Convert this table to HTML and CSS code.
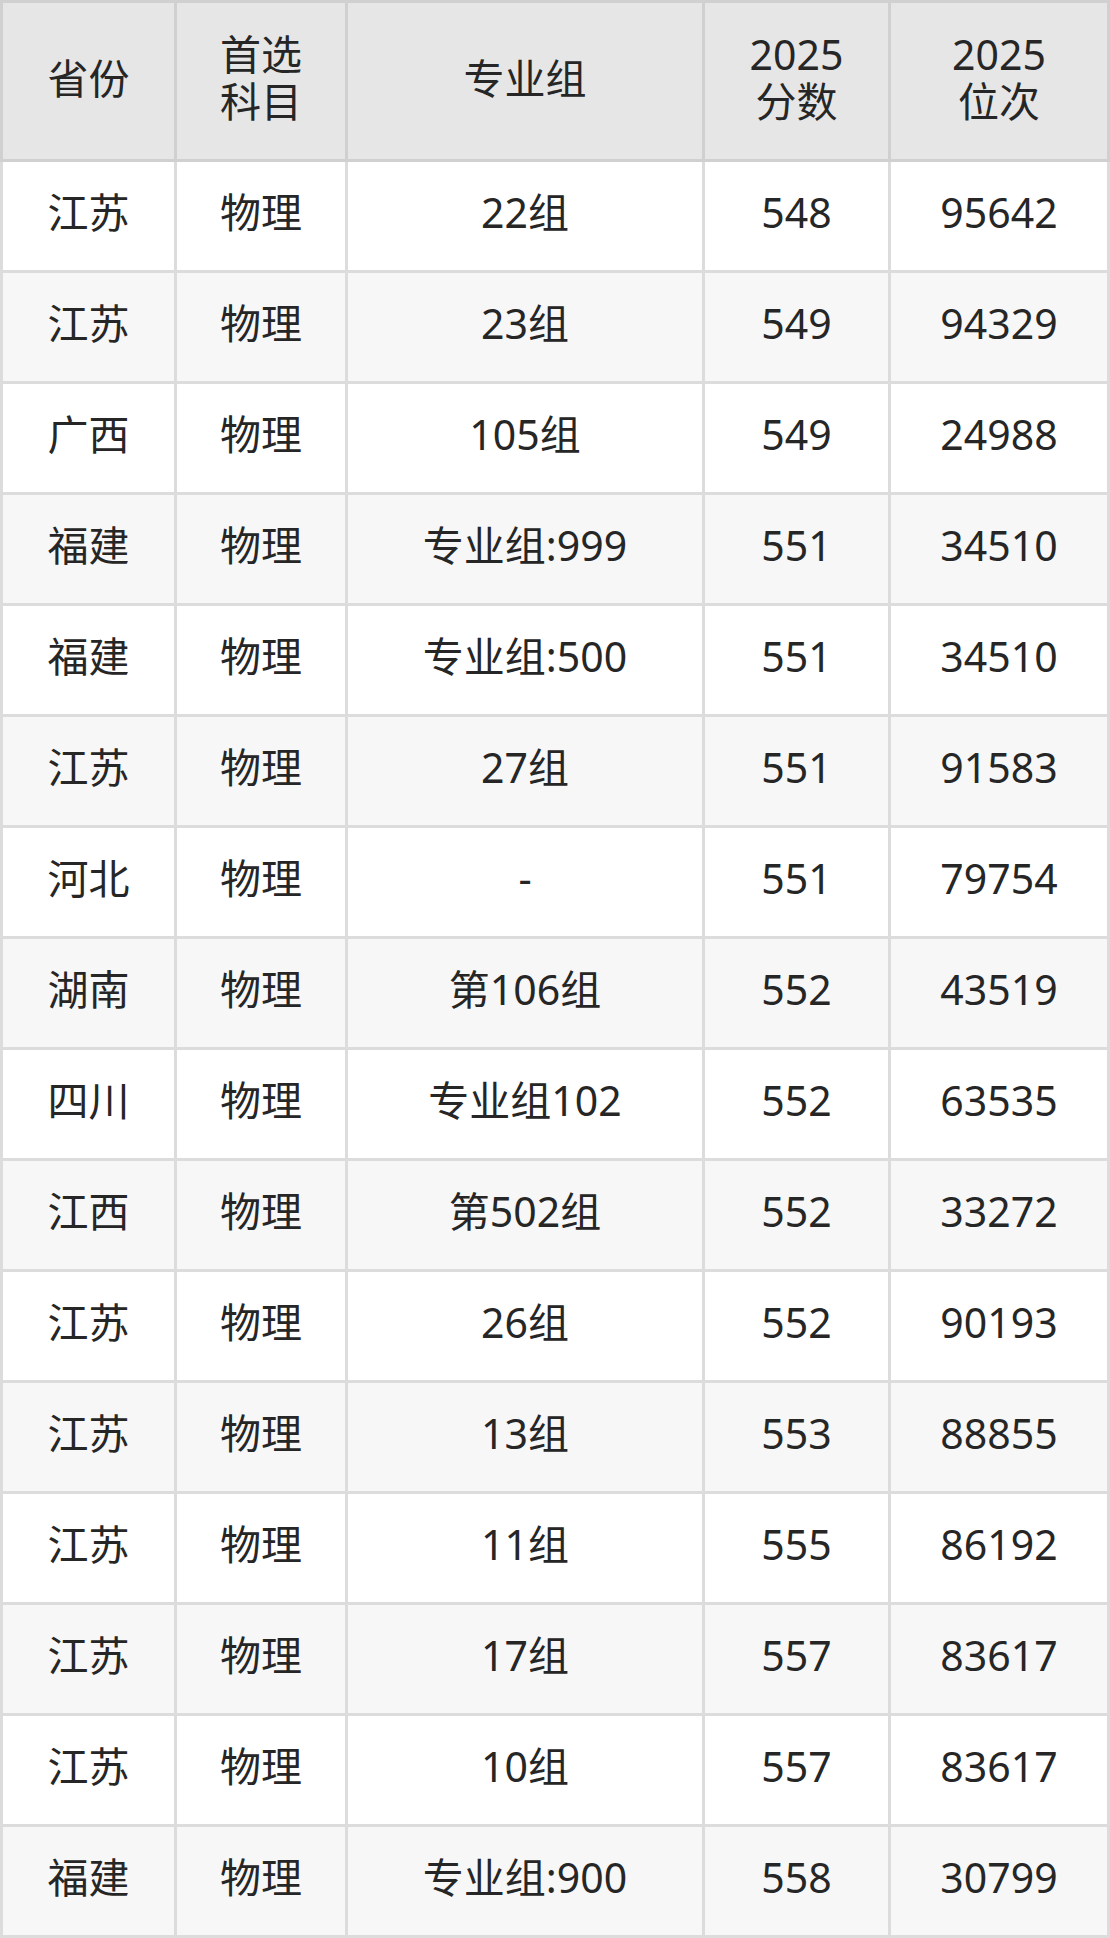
FILE: index.html
```html
<!DOCTYPE html>
<html lang="zh-CN">
<head>
<meta charset="utf-8">
<title>分数线</title>
<link rel="stylesheet" href="styles.css">
</head>
<body>
<table class="score-table">
  <thead>
    <tr>
      <th class="c1">省份</th>
      <th class="c2"><span class="hl">首选</span><span class="hl">科目</span></th>
      <th class="c3">专业组</th>
      <th class="c4"><span class="hl">2025</span><span class="hl">分数</span></th>
      <th class="c5"><span class="hl">2025</span><span class="hl">位次</span></th>
    </tr>
  </thead>
  <tbody>
    <tr><td>江苏</td><td>物理</td><td>22组</td><td>548</td><td>95642</td></tr>
    <tr><td>江苏</td><td>物理</td><td>23组</td><td>549</td><td>94329</td></tr>
    <tr><td>广西</td><td>物理</td><td>105组</td><td>549</td><td>24988</td></tr>
    <tr><td>福建</td><td>物理</td><td>专业组:999</td><td>551</td><td>34510</td></tr>
    <tr><td>福建</td><td>物理</td><td>专业组:500</td><td>551</td><td>34510</td></tr>
    <tr><td>江苏</td><td>物理</td><td>27组</td><td>551</td><td>91583</td></tr>
    <tr><td>河北</td><td>物理</td><td>-</td><td>551</td><td>79754</td></tr>
    <tr><td>湖南</td><td>物理</td><td>第106组</td><td>552</td><td>43519</td></tr>
    <tr><td>四川</td><td>物理</td><td>专业组102</td><td>552</td><td>63535</td></tr>
    <tr><td>江西</td><td>物理</td><td>第502组</td><td>552</td><td>33272</td></tr>
    <tr><td>江苏</td><td>物理</td><td>26组</td><td>552</td><td>90193</td></tr>
    <tr><td>江苏</td><td>物理</td><td>13组</td><td>553</td><td>88855</td></tr>
    <tr><td>江苏</td><td>物理</td><td>11组</td><td>555</td><td>86192</td></tr>
    <tr><td>江苏</td><td>物理</td><td>17组</td><td>557</td><td>83617</td></tr>
    <tr><td>江苏</td><td>物理</td><td>10组</td><td>557</td><td>83617</td></tr>
    <tr><td>福建</td><td>物理</td><td>专业组:900</td><td>558</td><td>30799</td></tr>
  </tbody>
</table>
</body>
</html>
```
FILE: styles.css
```css
html, body {
  margin: 0;
  padding: 0;
  background: #ffffff;
}

.score-table {
  width: 1110px;
  table-layout: fixed;
  border-collapse: separate;
  border-spacing: 0;
  font-family: "Noto Sans", "Noto Sans CJK SC", sans-serif;
  font-size: 41px;
  color: #262626;
}

.score-table th,
.score-table td {
  box-sizing: border-box;
  padding: 0;
  text-align: center;
  vertical-align: middle;
  border-right: 3px solid #dcdcdc;
  border-bottom: 3px solid #dcdcdc;
}

.score-table th {
  height: 162px;
  padding-bottom: 6px;
  font-weight: normal;
  line-height: 47px;
  background: #e6e6e6;
  border-top: 3px solid #d0d0d0;
  border-right-color: #d0d0d0;
  border-bottom-color: #d0d0d0;
}

.hl {
  display: block;
  height: 47px;
  overflow: visible;
}

.score-table th:first-child,
.score-table td:first-child {
  border-left: 3px solid #dcdcdc;
}

.score-table th:first-child {
  border-left-color: #d0d0d0;
}

.score-table td {
  height: 111px;
  padding-bottom: 8px;
  line-height: 48px;
  background: #ffffff;
}

.score-table tbody tr:nth-child(even) td {
  background: #f7f7f7;
}

.c1 { width: 177px; }
.c2 { width: 171px; }
.c3 { width: 357px; }
.c4 { width: 186px; }
.c5 { width: 219px; }
```
